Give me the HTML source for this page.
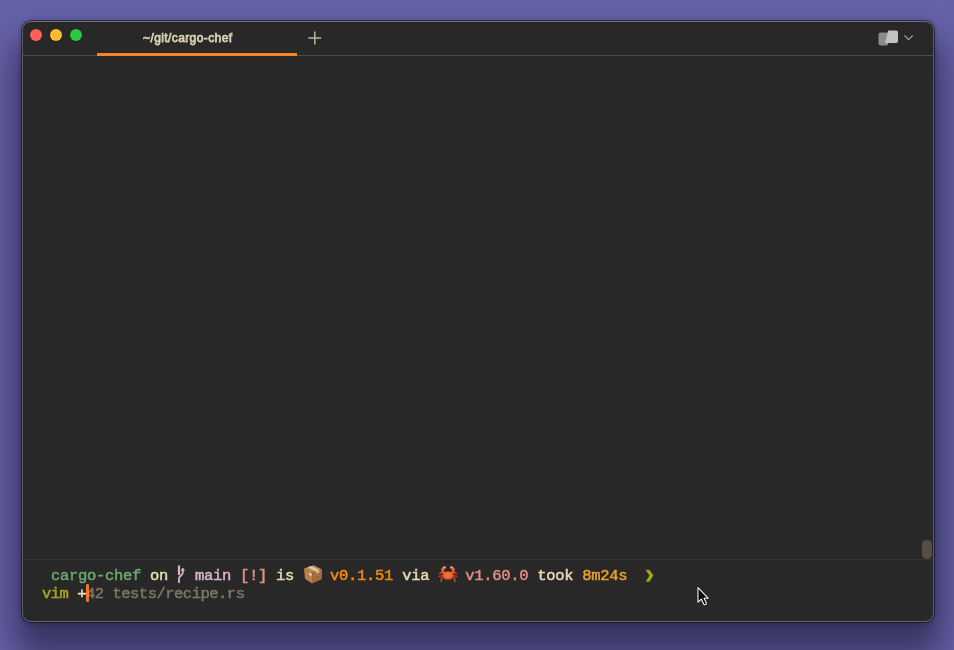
<!DOCTYPE html>
<html><head><meta charset="utf-8">
<style>
html,body{margin:0;padding:0;}
body{width:954px;height:650px;overflow:hidden;background:#6662aa;position:relative;font-family:"Liberation Sans",sans-serif;}
.abs{position:absolute;}
.shadow{position:absolute;left:22px;top:21px;width:912px;height:601px;border-radius:9px;box-shadow:0 0 0 1px rgba(5,5,25,0.5),0 1px 4px 1px rgba(0,0,10,0.25),0 26px 34px 8px rgba(0,0,15,0.47);}
.win{position:absolute;left:22px;top:21px;width:910px;height:599px;background:#282828;border:1px solid #5a5a58;border-top-color:#6e6d6a;border-bottom-color:#66645f;border-radius:9px;}
.dot{position:absolute;top:29px;width:12px;height:12px;border-radius:50%;}
.r{left:30px;background:#fe5f57;}
.y{left:50px;background:#febc2e;}
.g{left:70px;background:#28c840;}
.title{position:absolute;will-change:transform;left:142.5px;top:31.2px;font-size:12px;font-weight:normal;letter-spacing:0.4px;-webkit-text-stroke:0.75px #dbd1b2;color:#dbd1b2;}
.tabline{position:absolute;left:23px;top:55px;width:910px;height:1px;background:#4d4943;}
.tabul{position:absolute;left:97px;top:53px;width:200px;height:3px;background:#f7862a;}
.sep{position:absolute;left:23px;top:559px;width:910px;height:1px;background:#37342e;}
.scroll{position:absolute;left:922px;top:539.6px;width:10px;height:19.4px;border-radius:4.6px;background:#544e47;}
.mono{font-family:"Liberation Mono",monospace;white-space:pre;position:absolute;will-change:transform;-webkit-text-stroke:0.5px currentColor;}
.l1{left:51px;top:567.4px;font-size:15.5px;letter-spacing:-0.3px;line-height:18px;}
.l2{left:41.5px;top:585px;font-size:15.5px;letter-spacing:-0.5px;line-height:18px;}
.fg{color:#ebdbb2}
</style></head><body>
<div class="shadow"></div>
<div class="win"></div>
<div class="dot r"></div><div class="dot y"></div><div class="dot g"></div>
<div class="title">~/git/cargo-chef</div>
<div class="tabline"></div>
<div class="tabul"></div>
<svg class="abs" style="left:307.5px;top:31px" width="14" height="14" viewBox="0 0 14 14"><path d="M6.8 0.6V13.4M0.4 7H13.2" stroke="#bcb49b" stroke-width="1.5"/></svg>
<svg class="abs" style="left:876px;top:28px" width="40" height="20" viewBox="0 0 40 20">
  <rect x="2.5" y="4.5" width="9.8" height="12.9" rx="2" fill="#8a8a8a"/>
  <path d="M12.1 2.5H20a2 2 0 0 1 2 2V12.9a2 2 0 0 1-2 2H9.1Z" fill="#c2c2c2"/>
  <path d="M28.4 7.3L32.6 11.7L36.8 7.3" stroke="#a5a5a5" stroke-width="1.1" fill="none"/>
</svg>
<div class="sep"></div>
<div class="scroll"></div>
<div class="mono l1"><span style="color:#6ca86b">cargo-chef</span><span class="fg"> on </span><span> </span><span style="color:#dbb2cb"> main</span><span style="color:#e6928a"> [!]</span><span class="fg"> is </span><span>  </span><span style="color:#f98a0c"> v0.1.51</span><span class="fg"> via </span><span>  </span><span style="color:#e28e86"> v1.60.0</span><span class="fg"> took</span><span style="color:#e6a12c"> 8m24s</span></div>
<div class="mono l2"><span style="color:#aba51f">vim</span><span class="fg"> +</span><span style="color:#7f7766">42 tests/recipe.rs</span></div>
<div class="abs" style="left:86.2px;top:584px;width:2.7px;height:17.8px;border-radius:1.3px;background:rgba(250,128,40,0.93)"></div>
<!-- branch icon -->
<svg class="abs" style="left:174px;top:563px" width="14" height="22" viewBox="0 0 14 22">
  <path d="M5 2.5V12" stroke="#dfb3cd" stroke-width="2.2" stroke-linecap="butt" fill="none"/>
  <path d="M5 20V15.5C5 13 8.8 12.5 8.8 9.5V6.5" stroke="#dfb3cd" stroke-width="1.8" fill="none"/>
  <path d="M7.3 7.4L8.8 5L10.3 7.4Z" fill="#dfb3cd" stroke="#dfb3cd" stroke-width="0.9" stroke-linejoin="round"/>
</svg>
<!-- package emoji -->
<svg class="abs" style="left:303px;top:564px" width="20" height="21" viewBox="0 0 20 21">
  <path d="M1 4.4L10.6 1.2L19 5.4L9.2 8.8Z" fill="#c48a56"/>
  <path d="M4.6 3.2L8 2.1L16.4 6.2L12.9 7.4Z" fill="#d9c9a8"/>
  <path d="M1 4.4L9.2 8.8L9 19.6L2 14.8Z" fill="#bb8048"/>
  <path d="M9.2 8.8L19 5.4L18.8 15.2L9 19.6Z" fill="#a86e3a"/>
  <path d="M12.9 7.4L16.4 6.2L16.3 8.4L12.9 9.6Z" fill="#cdbb98"/>
  <path d="M6.4 8.6L8.4 9.7L8.4 12.2L6.4 11.1Z" fill="#e4e4e4"/>
  <path d="M13.5 13.8l1 -0.4M15.5 13l1 -0.4" stroke="#6e4a28" stroke-width="0.7"/>
</svg>
<!-- crab emoji -->
<svg class="abs" style="left:438px;top:564px" width="20" height="20" viewBox="0 0 20 20">
  <g stroke="#d9491c" stroke-width="1.3" fill="none" stroke-linecap="round" stroke-linejoin="round">
    <path d="M5.5 9.6L2.6 8.6L1.6 9.8M5.2 11.6L1.4 12.3M5.6 13.2L2.8 15.2L3.4 17.6"/>
    <path d="M14.5 9.6L17.4 8.6L18.4 9.8M14.8 11.6L18.6 12.3M14.4 13.2L17.2 15.2L16.6 17.6"/>
  </g>
  <path d="M6.2 9.8C2.4 8.6 2 4.6 5.4 2.4L8.6 2.6L7 4.8C5.4 5.6 5.6 7.6 7.6 8.8Z" fill="#ec5e2c"/>
  <path d="M13.8 9.8C17.6 8.6 18 4.6 14.6 2.4L11.4 2.6L13 4.8C14.6 5.6 14.4 7.6 12.4 8.8Z" fill="#ec5e2c"/>
  <ellipse cx="6.4" cy="3.6" rx="1.5" ry="1" fill="#f6a07a"/>
  <ellipse cx="13.6" cy="3.6" rx="1.5" ry="1" fill="#f6a07a"/>
  <ellipse cx="10" cy="11.5" rx="5.2" ry="3.9" fill="#ee5c26"/>
  <ellipse cx="10" cy="11" rx="3.2" ry="3" fill="#f37a3a"/>
  <path d="M8.6 9v4.6M11.4 9v4.6" stroke="#d94a1a" stroke-width="0.5"/>
  <path d="M6.5 14.6L8.2 15.6M13.5 14.6L11.8 15.6" stroke="#a89060" stroke-width="0.9"/>
</svg>
<svg class="abs" style="left:640px;top:565px" width="20" height="20" viewBox="640 565 20 20"><path d="M645.9 570.1H649.4L653.1 575.4L649.4 581.4H646.1L649.7 575.6Z" fill="#aaa71d" stroke="#aaa71d" stroke-width="0.4" stroke-linejoin="round"/></svg>
<!-- mouse cursor -->
<svg class="abs" style="left:696px;top:585.5px" width="16" height="22" viewBox="0 0 16 22">
  <path d="M2 1.6V16.2L5.3 13.1L7.7 18.1C7.9 18.6 8.5 18.8 9 18.6L9.8 18.2C10.3 17.9 10.5 17.4 10.3 16.9L8 12.2H12.1Z" fill="#000" stroke="#fff" stroke-width="1.05" stroke-linejoin="round"/>
</svg>
</body></html>
